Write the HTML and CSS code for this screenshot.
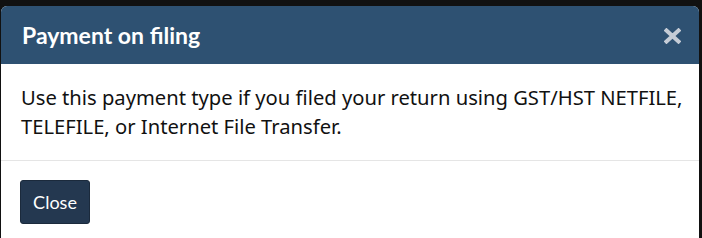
FILE: index.html
```html
<!DOCTYPE html>
<html lang="en">

<head>
    <meta charset="UTF-8">
    <meta name="viewport" content="width=device-width, initial-scale=1.0">
    <title>Payment on filing</title>
    <link rel="stylesheet" href="styles.css">
</head>

<body>
    <div class="modal">
        <div class="modal-header">
            <h2 class="modal-title">Payment on filing</h2>
            <button class="modal-x" aria-label="Close">
                <svg width="17" height="16" viewBox="0 0 17 16">
                    <path d="M2.5 2.5 L14.5 13.5 M14.5 2.5 L2.5 13.5" stroke="#c5ccd6" stroke-width="4" stroke-linecap="square" fill="none"/>
                </svg>
            </button>
        </div>
        <div class="modal-body">
            <p>Use this payment type if you filed your return using GST/HST NETFILE, TELEFILE, or Internet File Transfer.</p>
        </div>
        <div class="modal-footer">
            <button class="close-btn">Close</button>
        </div>
    </div>
</body>

</html>
```

FILE: styles.css
```css
body {
    margin: 0;
    background-color: #111111;
    font-family: "Noto Sans", sans-serif;
}

.modal {
    margin: 6px 3px 0 1px;
    background-color: #ffffff;
    border-radius: 6px 6px 0 0;
    overflow: hidden;
    height: calc(100vh - 6px);
}

.modal-header {
    display: flex;
    align-items: center;
    justify-content: space-between;
    height: 58px;
    padding: 0 18px 0 21px;
    background-color: #2e5172;
}

.modal-title {
    margin: 0;
    color: #ffffff;
    font-family: Lato, sans-serif;
    font-size: 23px;
    font-weight: bold;
}

.modal-x {
    border: none;
    background: none;
    padding: 0;
    display: flex;
    margin-top: 2px;
}

.modal-body {
    padding: 19px 10px 19px 20px;
    border-bottom: 1px solid #e5e5e5;
}

.modal-body p {
    margin: 0;
    font-size: 20.2px;
    line-height: 29px;
    color: #111111;
}

.modal-footer {
    padding: 19px 19px;
}

.close-btn {
    background-color: #243850;
    color: #ffffff;
    border: 1px solid #1b2a3c;
    border-radius: 3px;
    font-family: Lato, sans-serif;
    font-size: 18px;
    width: 70px;
    height: 44px;
    padding: 0;
}
```
